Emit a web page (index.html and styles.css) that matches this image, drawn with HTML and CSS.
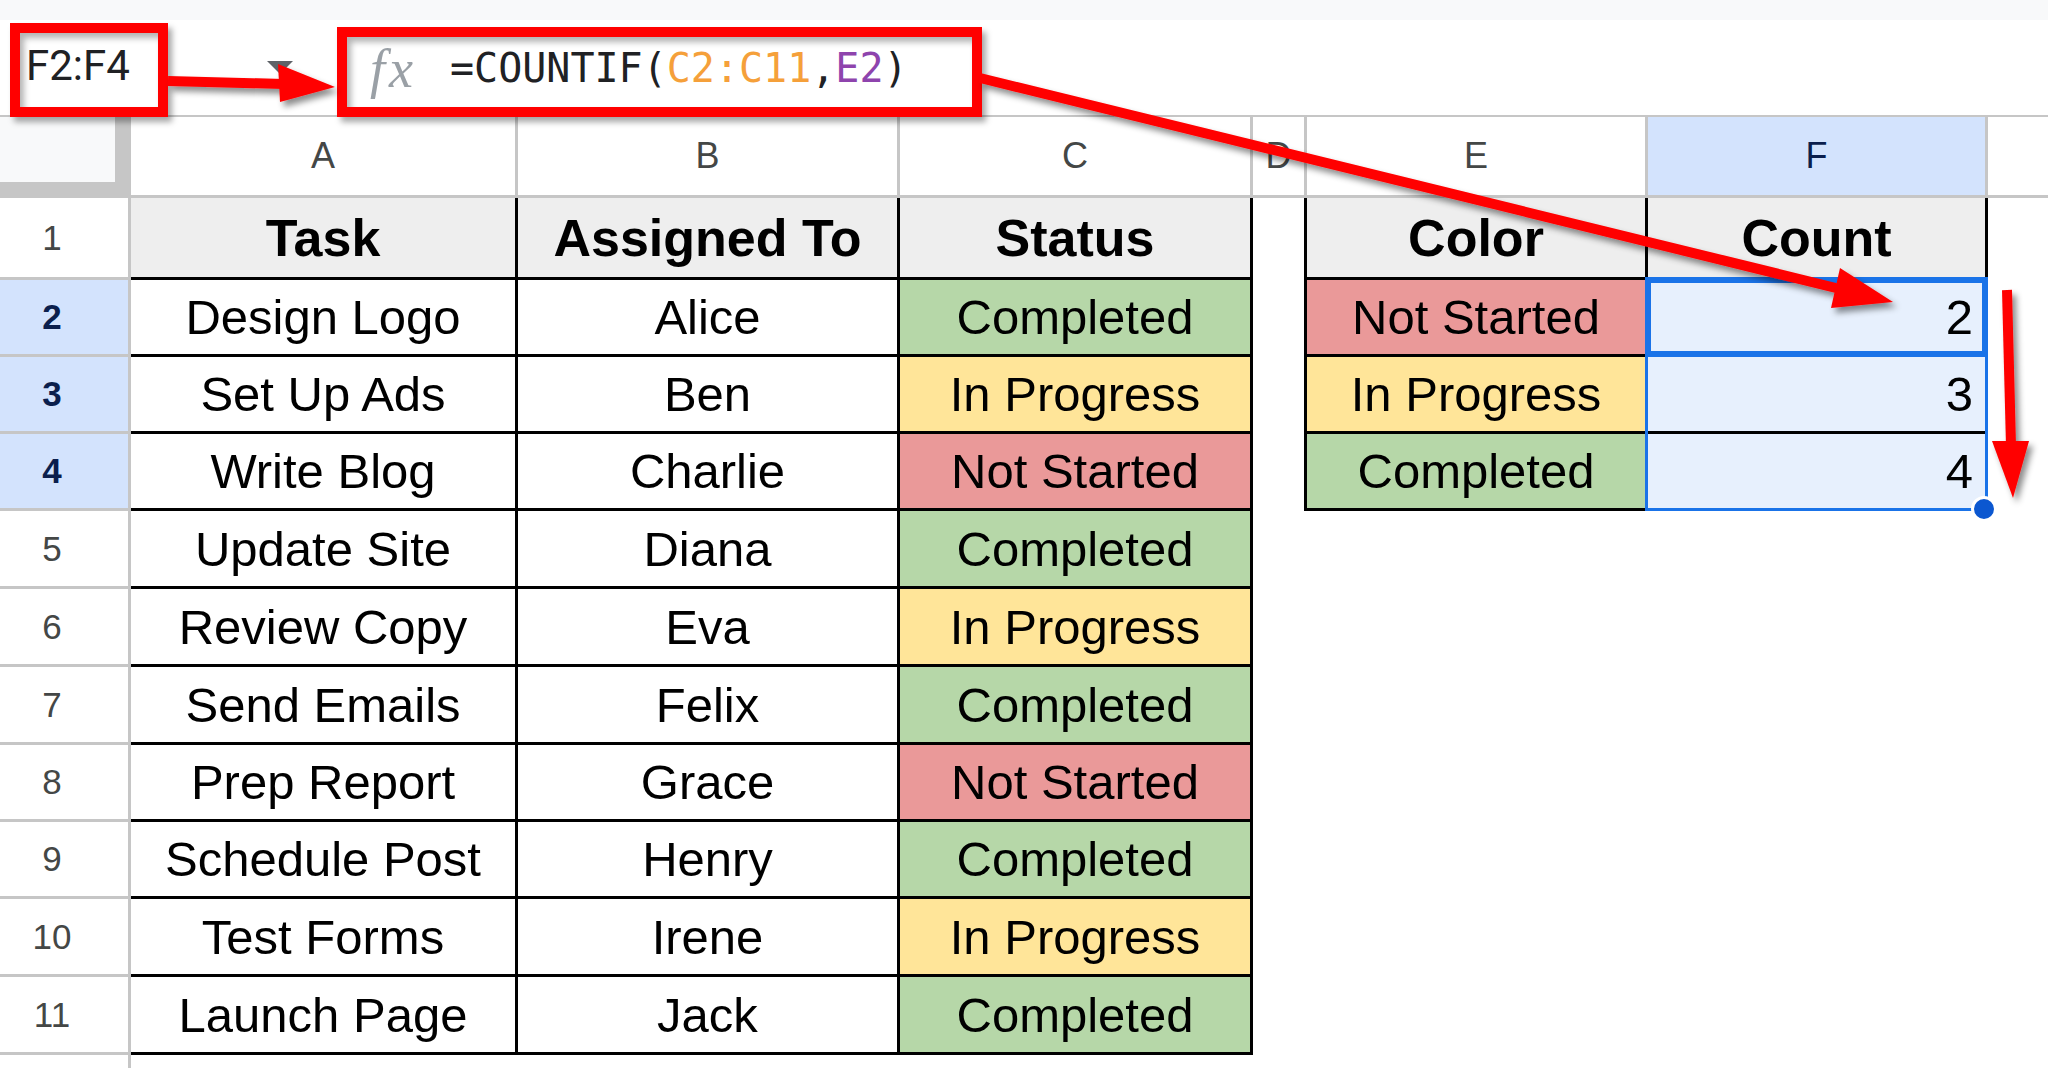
FILE: index.html
```html
<!DOCTYPE html>
<html>
<head>
<meta charset="utf-8">
<title>COUNTIF</title>
<link rel="stylesheet" href="styles.css">
</head>
<body>
<div class="app">
  <div class="topband"></div>
  <div class="fbar">
    <div class="namebox">F2:F4</div>
    <div class="caret"></div>
    <div class="formula"><span class="fx">fx</span><span class="ftext">=COUNTIF(<span class="r1">C2:C11</span>,<span class="r2">E2</span>)</span></div>
  </div>
  <div class="sheet">
    <div class="corner"></div>
    <div class="ch">A</div>
    <div class="ch">B</div>
    <div class="ch">C</div>
    <div class="ch">D</div>
    <div class="ch">E</div>
    <div class="ch s">F</div>
    <div class="ch last"></div>

    <div class="rh">1</div>
    <div class="t hd">Task</div>
    <div class="t hd">Assigned To</div>
    <div class="t hd">Status</div>
    <div class="dl"></div>
    <div class="t hd">Color</div>
    <div class="t hd">Count</div>
    <div></div>

    <div class="rh s">2</div>
    <div class="t">Design Logo</div>
    <div class="t">Alice</div>
    <div class="t g">Completed</div>
    <div class="dl"></div>
    <div class="t r">Not Started</div>
    <div class="t n host">2<div class="range"><div class="handle"></div></div><div class="active"></div></div>
    <div></div>

    <div class="rh s">3</div>
    <div class="t">Set Up Ads</div>
    <div class="t">Ben</div>
    <div class="t y">In Progress</div>
    <div class="dl"></div>
    <div class="t y">In Progress</div>
    <div class="t n">3</div>
    <div></div>

    <div class="rh s">4</div>
    <div class="t">Write Blog</div>
    <div class="t">Charlie</div>
    <div class="t r">Not Started</div>
    <div class="dl"></div>
    <div class="t g">Completed</div>
    <div class="t n">4</div>
    <div></div>

    <div class="rh">5</div>
    <div class="t">Update Site</div>
    <div class="t">Diana</div>
    <div class="t g">Completed</div>
    <div></div><div></div><div></div><div></div>

    <div class="rh">6</div>
    <div class="t">Review Copy</div>
    <div class="t">Eva</div>
    <div class="t y">In Progress</div>
    <div></div><div></div><div></div><div></div>

    <div class="rh">7</div>
    <div class="t">Send Emails</div>
    <div class="t">Felix</div>
    <div class="t g">Completed</div>
    <div></div><div></div><div></div><div></div>

    <div class="rh">8</div>
    <div class="t">Prep Report</div>
    <div class="t">Grace</div>
    <div class="t r">Not Started</div>
    <div></div><div></div><div></div><div></div>

    <div class="rh">9</div>
    <div class="t">Schedule Post</div>
    <div class="t">Henry</div>
    <div class="t g">Completed</div>
    <div></div><div></div><div></div><div></div>

    <div class="rh">10</div>
    <div class="t">Test Forms</div>
    <div class="t">Irene</div>
    <div class="t y">In Progress</div>
    <div></div><div></div><div></div><div></div>

    <div class="rh">11</div>
    <div class="t">Launch Page</div>
    <div class="t">Jack</div>
    <div class="t g">Completed</div>
    <div></div><div></div><div></div><div></div>

    <div class="rh end"></div>
  </div>

  <svg class="arrows" width="2048" height="1068" viewBox="0 0 2048 1068">
    <defs>
      <filter id="sh" filterUnits="userSpaceOnUse" x="0" y="0" width="2048" height="1068">
        <feDropShadow dx="4" dy="5" stdDeviation="3" flood-color="#000" flood-opacity="0.45"/>
      </filter>
    </defs>
    <g filter="url(#sh)" fill="#ff0000" stroke="#ff0000">
      <line x1="168" y1="81" x2="284" y2="84" stroke-width="10"/>
      <polygon points="278,64 335,87 280,102" stroke="none"/>
      <line x1="980" y1="78" x2="1840" y2="289" stroke-width="10"/>
      <polygon points="1840,268 1893,302 1831,308" stroke="none"/>
      <line x1="2007" y1="290" x2="2011" y2="446" stroke-width="10"/>
      <polygon points="1992,441 2029,441 2013,498" stroke="none"/>
    </g>
  </svg>
</div>
</body>
</html>
```

FILE: styles.css
```css
html, body {
  margin: 0;
  padding: 0;
  background: #ffffff;
}

body {
  width: 2048px;
  height: 1068px;
  overflow: hidden;
  font-family: "Liberation Sans", Arial, sans-serif;
}

.app {
  position: relative;
  width: 2048px;
  height: 1068px;
  display: flex;
  flex-direction: column;
}

.topband {
  flex: none;
  height: 20px;
  background: #f8f9fa;
}

.fbar {
  flex: none;
  height: 95px;
  display: flex;
  align-items: flex-start;
  position: relative;
  z-index: 3;
  background: #ffffff;
}

.namebox {
  box-sizing: border-box;
  flex: none;
  width: 158px;
  height: 94px;
  margin: 3px 0 0 10px;
  padding: 12px 0 0 6px;
  border: 10px solid #ff0000;
  background: #ffffff;
  box-shadow: 4px 5px 6px rgba(0, 0, 0, 0.35), inset 4px 5px 6px rgba(0, 0, 0, 0.3);
  font-family: Roboto, "Liberation Sans", sans-serif;
  font-size: 42px;
  line-height: 1;
  color: #202124;
}

.caret {
  flex: none;
  width: 0;
  height: 0;
  margin: 41px 0 0 99px;
  border-left: 13px solid transparent;
  border-right: 13px solid transparent;
  border-top: 13px solid #5f6368;
}

.formula {
  box-sizing: border-box;
  flex: none;
  width: 645px;
  height: 90px;
  margin: 7px 0 0 44px;
  padding-left: 23px;
  border: 10px solid #ff0000;
  background: #ffffff;
  box-shadow: 4px 5px 6px rgba(0, 0, 0, 0.35), inset 4px 5px 6px rgba(0, 0, 0, 0.3);
  display: flex;
  align-items: flex-start;
  white-space: nowrap;
}

.fx {
  flex: none;
  width: 80px;
  margin-top: 5px;
  font-family: "Liberation Serif", serif;
  font-style: italic;
  font-size: 54px;
  line-height: 1;
  letter-spacing: 4px;
  color: #9aa0a6;
}

.ftext {
  margin-top: 11px;
  font-family: "DejaVu Sans Mono", "Liberation Mono", monospace;
  font-size: 40px;
  line-height: 1;
  color: #202124;
}

.r1 { color: #f5a03a; }
.r2 { color: #8e44ad; }

.sheet {
  flex: 1;
  display: grid;
  grid-template-columns: 131px 387px 382px 353px 54px 341px 340px 1fr;
  grid-template-rows: 83px 82px 77px 77px 77px 78px 78px 78px 77px 77px 78px 78px 1fr;
}

.sheet > div {
  box-sizing: border-box;
  min-width: 0;
}

.corner {
  background: #f8f9fa;
  border-top: 2px solid #c6c6c6;
  border-right: 16px solid #c6c6c6;
  border-bottom: 16px solid #c6c6c6;
}

.ch {
  display: flex;
  align-items: center;
  justify-content: center;
  border-top: 2px solid #c6c6c6;
  border-right: 3px solid #c6c6c6;
  border-bottom: 3px solid #c6c6c6;
  font-size: 36px;
  color: #444746;
  background: #ffffff;
}

.ch.s {
  background: #d3e3fd;
  color: #0b1f4d;
}

.ch.last {
  border-right: none;
}

.rh {
  display: flex;
  align-items: center;
  justify-content: center;
  padding-right: 24px;
  border-right: 3px solid #c6c6c6;
  border-bottom: 3px solid #c6c6c6;
  font-size: 35px;
  color: #444746;
  background: #ffffff;
}

.rh.s {
  background: #d3e3fd;
  color: #0b1f4d;
  font-weight: bold;
}

.rh.end {
  border-bottom: none;
}

.t {
  display: flex;
  align-items: center;
  justify-content: center;
  border-right: 3px solid #000000;
  border-bottom: 3px solid #000000;
  font-size: 49px;
  color: #000000;
  white-space: nowrap;
  background: #ffffff;
}

.t.hd {
  background: #eeeeee;
  font-weight: bold;
  font-size: 52px;
}

.t.g { background: #b6d7a8; }
.t.y { background: #ffe599; }
.t.r { background: #ea9999; }

.t.n {
  justify-content: flex-end;
  padding-right: 12px;
  background: #e7f0fd;
}

.dl {
  border-right: 3px solid #000000;
}

.host {
  position: relative;
}

.range {
  position: absolute;
  left: -3px;
  top: -3px;
  width: 343px;
  height: 234px;
  box-sizing: border-box;
  border: 3px solid #1a73e8;
  z-index: 2;
  pointer-events: none;
}

.active {
  position: absolute;
  left: -3px;
  top: -3px;
  width: 343px;
  height: 80px;
  box-sizing: border-box;
  border: 6px solid #1a73e8;
  z-index: 2;
  pointer-events: none;
}

.handle {
  position: absolute;
  right: -12px;
  bottom: -14px;
  width: 26px;
  height: 26px;
  box-sizing: border-box;
  border-radius: 50%;
  border: 3px solid #ffffff;
  background: #0b57d0;
}

.arrows {
  position: absolute;
  left: 0;
  top: 0;
  z-index: 10;
  pointer-events: none;
}
```
